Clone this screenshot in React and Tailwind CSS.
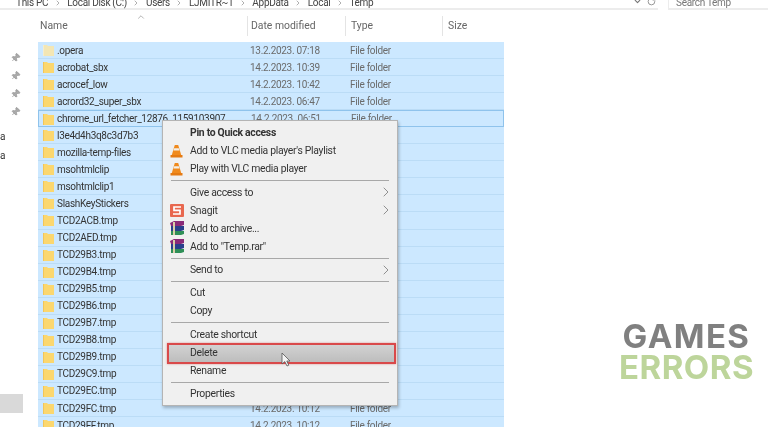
import React from "react";
import { ChevronDown, ChevronRight, ChevronUp, RotateCw, Pin } from "lucide-react";

const files = [
  [".opera", "13.2.2023. 07:18"],
  ["acrobat_sbx", "14.2.2023. 10:39"],
  ["acrocef_low", "14.2.2023. 10:42"],
  ["acrord32_super_sbx", "14.2.2023. 06:47"],
  ["chrome_url_fetcher_12876_1159103907", "14.2.2023. 06:51"],
  ["l3e4d4h3q8c3d7b3", "14.2.2023. 08:12"],
  ["mozilla-temp-files", "14.2.2023. 08:12"],
  ["msohtmlclip", "14.2.2023. 08:12"],
  ["msohtmlclip1", "14.2.2023. 08:12"],
  ["SlashKeyStickers", "14.2.2023. 08:12"],
  ["TCD2ACB.tmp", "14.2.2023. 10:12"],
  ["TCD2AED.tmp", "14.2.2023. 10:12"],
  ["TCD29B3.tmp", "14.2.2023. 10:12"],
  ["TCD29B4.tmp", "14.2.2023. 10:12"],
  ["TCD29B5.tmp", "14.2.2023. 10:12"],
  ["TCD29B6.tmp", "14.2.2023. 10:12"],
  ["TCD29B7.tmp", "14.2.2023. 10:12"],
  ["TCD29B8.tmp", "14.2.2023. 10:12"],
  ["TCD29B9.tmp", "14.2.2023. 10:12"],
  ["TCD29C9.tmp", "14.2.2023. 10:12"],
  ["TCD29EC.tmp", "14.2.2023. 10:12"],
  ["TCD29FC.tmp", "14.2.2023. 10:12"],
  ["TCD29FF.tmp", "14.2.2023. 10:12"],
];

const crumbs = ["This PC", "Local Disk (C:)", "Users", "LJMITR~1", "AppData", "Local", "Temp"];

function Folder({ pale }) {
  return (
    <svg width="11" height="12" viewBox="0 0 11 12" className="shrink-0">
      <path d="M0 1h4l1 1h6v10H0z" fill={pale ? "#f3e6b4" : "#fbd76f"} />
      <path d="M0 1h1v11H0z" fill={pale ? "#f6edcc" : "#f3c659"} />
    </svg>
  );
}

function Vlc() {
  return (
    <svg width="13" height="14" viewBox="0 0 13 14">
      <path d="M4.8 1h3.4l3 10H1.8z" fill="#f08a1d" />
      <path d="M4.2 4.2h4.6l.7 2.4H3.5z" fill="#f4efe6" />
      <path d="M0.5 11h12v2.5H0.5z" fill="#e57a12" />
    </svg>
  );
}

function Snagit() {
  return (
    <svg width="14" height="13" viewBox="0 0 14 13">
      <rect width="14" height="13" rx="1" fill="#e8684f" />
      <path d="M11 3H4v3.3h6v3.7H3" fill="none" stroke="#fff" strokeWidth="1.7" />
    </svg>
  );
}

function Rar() {
  return (
    <svg width="14" height="14" viewBox="0 0 14 14">
      <path d="M0 2l4-2h10v4l-3 1H1z" fill="#8a2a78" />
      <path d="M1 5h13v4l-3 1H1z" fill="#2a3f8c" />
      <path d="M1 10h13v3l-3 1H1z" fill="#2f8f57" />
      <path d="M3 1h2v13H3z" fill="#d8cfa8" />
    </svg>
  );
}

function Item({ icon, label, bold, arrow }) {
  return (
    <div className="relative flex h-[18px] items-center">
      <span className="flex w-[27px] shrink-0 justify-center">{icon}</span>
      <span className={`text-[10.4px] tracking-[-0.3px] text-[#333] ${bold ? "font-bold" : ""}`}>{label}</span>
      {arrow && <ChevronRight className="absolute right-[3px] h-[16px] w-[16px] text-[#777]" strokeWidth={1.2} />}
    </div>
  );
}

function Sep() {
  return (
    <div className="flex h-[5.4px] items-center px-[8px]">
      <div className="h-px w-full bg-[#a8a8a8]" />
    </div>
  );
}

function ContextMenu() {
  return (
    <div className="absolute left-[162px] top-[120px] h-[286px] w-[236px] border border-[#b4b4b4] bg-[#f0f0f0] pt-[3px] shadow-[1px_2px_3px_rgba(0,0,0,0.25)]">
      <Item label="Pin to Quick access" bold />
      <Item icon={<Vlc />} label="Add to VLC media player's Playlist" />
      <Item icon={<Vlc />} label="Play with VLC media player" />
      <Sep />
      <Item label="Give access to" arrow />
      <Item icon={<Snagit />} label="Snagit" arrow />
      <Item icon={<Rar />} label="Add to archive..." />
      <Item icon={<Rar />} label={'Add to "Temp.rar"'} />
      <Sep />
      <Item label="Send to" arrow />
      <Sep />
      <Item label="Cut" />
      <Item label="Copy" />
      <Sep />
      <Item label="Create shortcut" />
      <div className="relative">
        <div className="absolute -top-[1px] left-[4px] right-[1px] h-[21px] border-2 border-[#d9494a] bg-gradient-to-b from-[#d2d2d2] to-[#bdbdbd] shadow-[0_0_2px_rgba(200,60,60,0.5)]" />
        <Item label="Delete" />
        <svg width="11" height="16" viewBox="0 0 11 16" className="absolute left-[118px] top-[8px]">
          <path d="M1 1v11l2.8-2.4L6 14l1.8-.8-2-4.2H9z" fill="#f4f4f4" stroke="#555" strokeWidth="0.8" />
        </svg>
      </div>
      <Item label="Rename" />
      <Sep />
      <Item label="Properties" />
    </div>
  );
}

export default function App() {
  return (
    <div className="relative h-[427px] w-[768px] overflow-hidden bg-white blur-[0.4px] font-['Roboto','Noto_Sans',sans-serif]">
      {/* address bar, cut off by the top of the picture */}
      <div className="flex h-[10px] items-start overflow-hidden text-[10px] tracking-[-0.3px] text-[#444]">
        <div className="flex h-[10px] w-[658px] shrink-0 items-start justify-between border-b-2 border-[#ececec]">
          <div className="-mt-[5px] flex items-center">
            <span className="w-[16px]" />
            {crumbs.map((c, i) => (
              <React.Fragment key={c}>
                {i > 0 && <ChevronRight className="mx-[5.5px] h-[8px] w-[8px] text-[#888]" />}
                <span className="whitespace-nowrap">{c}</span>
              </React.Fragment>
            ))}
          </div>
          <div className="-mt-[3px] flex items-center gap-[5px] pr-[2px] text-[#777]">
            <ChevronDown className="h-[9px] w-[9px]" strokeWidth={3} />
            <RotateCw className="h-[9px] w-[9px]" strokeWidth={2} />
          </div>
        </div>
        <div className="-mt-[5px] ml-[10px] flex h-[15px] w-[100px] items-start border-b-2 border-l border-[#ececec] pl-[7px] text-[#777] whitespace-nowrap">
          Search Temp
        </div>
      </div>

      <div className="flex">
        {/* quick access column */}
        <div className="flex h-[417px] w-[38px] shrink-0 flex-col">
          <div className="flex h-[107px] flex-col items-end gap-[8.5px] pr-[17px] pt-[43px]">
            <Pin className="h-[11px] w-[11px] rotate-45 text-[#999]" fill="#aaa" />
            <Pin className="h-[11px] w-[11px] rotate-45 text-[#999]" fill="#aaa" />
            <Pin className="h-[11px] w-[11px] rotate-45 text-[#999]" fill="#aaa" />
            <Pin className="h-[11px] w-[11px] rotate-45 text-[#999]" fill="#aaa" />
          </div>
          <div className="mt-[11px] h-[18.5px] text-[10px] leading-[18.5px] text-[#333]">a</div>
          <div className="h-[18.5px] text-[10px] leading-[18.5px] text-[#333]">a</div>
          <div className="mt-[229px] h-[19px] w-[23px] bg-[#d9d9d9]" />
        </div>

        <div className="w-[466px] shrink-0">
          {/* column headers */}
          <div className="relative flex h-[32px] items-center text-[10.4px] text-[#666]">
            <ChevronUp className="absolute left-[98px] top-[2px] h-[10px] w-[10px] text-[#888]" strokeWidth={1.5} />
            <span className="h-[20px] w-[209px] pl-[2px] leading-[20px]">Name</span>
            <span className="h-[20px] w-[98px] border-l border-[#e4e4e4] pl-[3px] leading-[20px]">Date modified</span>
            <span className="h-[20px] w-[97px] border-l border-[#e4e4e4] pl-[5px] leading-[20px]">Type</span>
            <span className="h-[20px] w-[60px] border-l border-[#e4e4e4] pl-[5px] leading-[20px]">Size</span>
          </div>

          {files.map(([name, date], i) => (
            <div
              key={name}
              className={`flex h-[17.05px] items-center bg-[#cce8ff] text-[10px] tracking-[-0.3px] ${
                i === 4 ? "border border-[#8fc3ec]" : "border-b border-[#bbdcf6]"
              }`}
            >
              <div className={`flex w-[212px] shrink-0 items-center gap-[3px] ${i === 4 ? "pl-[4px]" : "pl-[5px]"}`}>
                <Folder pale={i === 0} />
                <span className="whitespace-nowrap text-[#333]">{name}</span>
              </div>
              <span className="w-[100px] shrink-0 whitespace-nowrap text-[#6b6b6b]">{date}</span>
              <span className="text-[#6b6b6b]">File folder</span>
            </div>
          ))}
        </div>
      </div>

      <ContextMenu />

      {/* watermark */}
      <div className="absolute left-[619px] top-[321px] flex w-[135px] flex-col items-center font-['Inter',sans-serif] font-bold leading-[31px]">
        <span className="whitespace-nowrap text-[33px] tracking-[1.4px] text-[#808080]">GAMES</span>
        <span className="whitespace-nowrap text-[33px] tracking-[0.5px] text-[#bdd59b]">ERRORS</span>
      </div>
    </div>
  );
}
